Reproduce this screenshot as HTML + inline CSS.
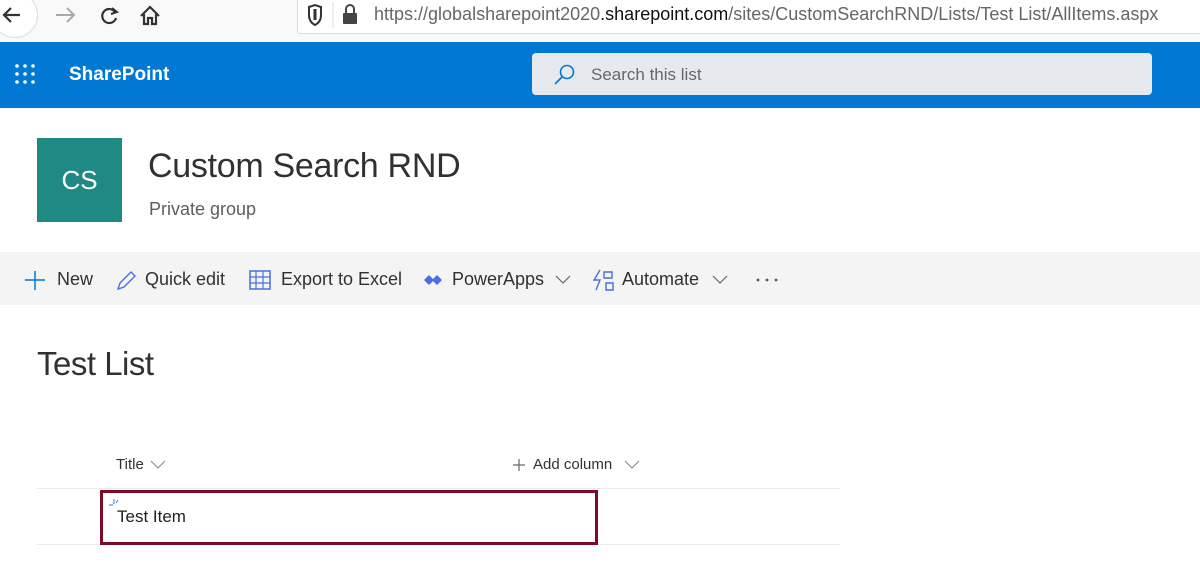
<!DOCTYPE html>
<html><head><meta charset="utf-8"><style>
*{margin:0;padding:0;box-sizing:border-box}
body{width:1200px;height:574px;overflow:hidden;background:#fff;font-family:"Liberation Sans",sans-serif;position:relative;color:#323130}
.a{position:absolute}
</style></head><body>
<div class="a" style="left:0;top:0;width:1200px;height:42px;background:#f9f9fa"></div>
<div class="a" style="left:-8px;top:-8px;width:46px;height:46px;border-radius:50%;background:#fff;border:1px solid #ddd"></div>
<svg class="a" style="left:0;top:0" width="300" height="42">
<path d="M20 15H4M11 8L4 15L11 22" stroke="#333" stroke-width="2.2" fill="none"/>
<path d="M74 15H56M67 8L74 15L67 22" stroke="#aaa" stroke-width="2" fill="none"/>
<path d="M115 12A7 7 0 1 0 116 18" stroke="#333" stroke-width="2.2" fill="none"/><path d="M112 8L117 12L111 14" stroke="#333" stroke-width="2" fill="none"/>
<path d="M141 16L150 7L159 16M144 14V24H148V18H152V24H156V14" stroke="#333" stroke-width="2.2" fill="none"/>
</svg>
<div class="a" style="left:297px;top:-2px;width:910px;height:36px;background:#fff;border:1px solid #ddd;border-radius:3px"></div>
<svg class="a" style="left:300px;top:0" width="70" height="34">
<path d="M9 7L15 5L21 7V15Q21 22 15 25Q9 22 9 15Z" stroke="#333" stroke-width="2" fill="none"/><path d="M15 9V20" stroke="#333" stroke-width="3"/>
<line x1="33" y1="2" x2="33" y2="28" stroke="#ddd"/>
<rect x="43" y="13" width="14" height="11" rx="1" fill="#444"/><path d="M46 13V9A4 4 0 0 1 54 9V13" stroke="#444" stroke-width="2" fill="none"/>
</svg>
<div class="a" style="left:374px;top:4px;font-size:18px;color:#666;white-space:nowrap">https://globalsharepoint2020<span style="color:#111">.sharepoint.com</span>/sites/CustomSearchRND/Lists/Test List/AllItems.aspx</div>
<div class="a" style="left:0;top:42px;width:1200px;height:66px;background:#0078d4"></div>
<svg class="a" style="left:14px;top:63px" width="24" height="22"><g fill="#fff"><circle cx="3" cy="3" r="1.8"/><circle cx="11" cy="3" r="1.8"/><circle cx="19" cy="3" r="1.8"/><circle cx="3" cy="11" r="1.8"/><circle cx="11" cy="11" r="1.8"/><circle cx="19" cy="11" r="1.8"/><circle cx="3" cy="19" r="1.8"/><circle cx="11" cy="19" r="1.8"/><circle cx="19" cy="19" r="1.8"/></g></svg>
<div class="a" style="left:69px;top:64px;font-size:19px;font-weight:bold;color:#fff">SharePoint</div>
<div class="a" style="left:532px;top:53px;width:620px;height:42px;background:#e6eaee;border-radius:4px"></div>
<svg class="a" style="left:552px;top:63px" width="24" height="24"><circle cx="15" cy="9" r="6.5" stroke="#0078d4" stroke-width="1.6" fill="none"/><path d="M10 14L3 21" stroke="#0078d4" stroke-width="1.6"/></svg>
<div class="a" style="left:591px;top:65px;font-size:17px;color:#666">Search this list</div>
<div class="a" style="left:37px;top:138px;width:85px;height:84px;background:#1e8a83;color:#fff;font-size:26px;text-align:center;line-height:84px">CS</div>
<div class="a" style="left:148px;top:147px;font-size:34px;letter-spacing:-0.3px;color:#323130">Custom Search RND</div>
<div class="a" style="left:149px;top:199px;font-size:18px;color:#605e5c">Private group</div>
<div class="a" style="left:0;top:252px;width:1200px;height:53px;background:#f4f4f4"></div>
<svg class="a" style="left:0;top:252px" width="800" height="53">
<path d="M35 19V38M25 28H45" stroke="#0078d4" stroke-width="1.5"/>
<path d="M118 37L120 31L131 20L135 24L124 35Z" stroke="#4a6ee0" stroke-width="1.4" fill="none"/>
<rect x="250" y="19" width="20" height="18" stroke="#4a6ee0" stroke-width="1.5" fill="none"/><path d="M256 19V37M250 25H270M250 31H270M263 19V37" stroke="#4a6ee0" stroke-width="1.2"/>
<path d="M424 28L429 23L434 28L429 33ZM432 28L437 23L442 28L437 33Z" fill="#4a6ee0"/>
<path d="M600 18L594 28H600L596 38M604 20H612V26H604ZM606 31H613V38H606Z" stroke="#4a6ee0" stroke-width="1.4" fill="none"/>
<path d="M556 24L563 31L570 24M713 24L720 31L727 24" stroke="#666" stroke-width="1.2" fill="none"/>
<g fill="#555"><circle cx="758" cy="28" r="1.4"/><circle cx="767" cy="28" r="1.4"/><circle cx="776" cy="28" r="1.4"/></g>
</svg>
<div class="a" style="top:269px;left:57px;font-size:18px;color:#323130;white-space:nowrap">New</div>
<div class="a" style="top:269px;left:145px;font-size:18px;color:#323130;white-space:nowrap">Quick edit</div>
<div class="a" style="top:269px;left:281px;font-size:18px;color:#323130;white-space:nowrap">Export to Excel</div>
<div class="a" style="top:269px;left:452px;font-size:18px;color:#323130;white-space:nowrap">PowerApps</div>
<div class="a" style="top:269px;left:622px;font-size:18px;color:#323130;white-space:nowrap">Automate</div>
<div class="a" style="left:37px;top:345px;font-size:33px;letter-spacing:-0.5px;color:#323130">Test List</div>
<div class="a" style="left:116px;top:456px;font-size:15px;color:#323130">Title</div>
<div class="a" style="left:533px;top:456px;font-size:15px;color:#323130">Add column</div>
<svg class="a" style="left:0;top:450px" width="700" height="30"><path d="M151 11L158 18L165 11M625 11L632 18L639 11" stroke="#888" stroke-width="1" fill="none"/><path d="M519 9V21M513 15H525" stroke="#666" stroke-width="1.2"/></svg>
<div class="a" style="left:37px;top:488px;width:803px;height:1px;background:#edebe9"></div>
<div class="a" style="left:37px;top:544px;width:803px;height:1px;background:#edebe9"></div>
<div class="a" style="left:100px;top:490px;width:498px;height:55px;border:3px solid #7d0a26"></div>
<div class="a" style="left:117px;top:507px;font-size:17px;color:#201f1e">Test Item</div>
<svg class="a" style="left:108px;top:497px" width="12" height="12"><path d="M1 8H5M6 2V7M10 3L8 6" stroke="#4a6ee0" stroke-width="1"/></svg>
</body></html>
